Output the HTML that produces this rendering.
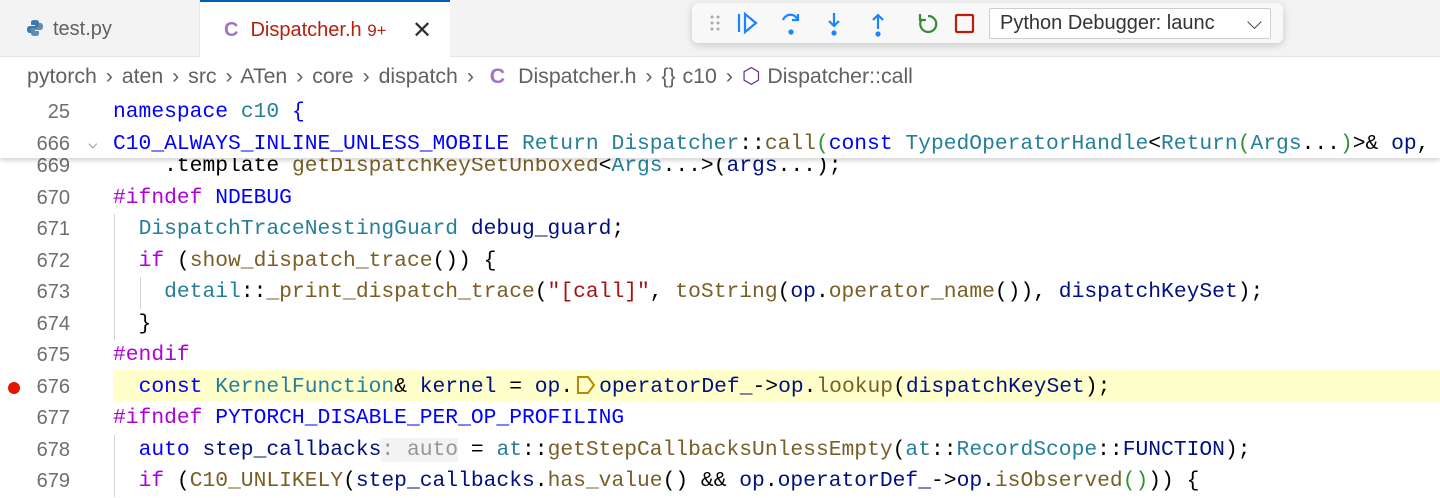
<!DOCTYPE html>
<html><head><meta charset="utf-8"><style>
*{margin:0;padding:0;box-sizing:border-box}
body{width:1440px;height:495px;overflow:hidden;background:#fff;position:relative;font-family:"Liberation Sans",sans-serif}
.tabs{position:absolute;left:0;top:0;width:1440px;height:57px;background:#f3f3f3;border-bottom:1px solid #e5e5e5}
.tab{position:absolute;top:0;height:57px;font-size:20px;line-height:59px;color:#616161}
.t1{left:0;width:200px;padding-left:25px;border-right:1px solid #e5e5e5}
.t2{left:200px;width:250px;background:#fff;border-top:2px solid #005fb8;line-height:57px;padding-left:24px;color:#b5200d;height:58px}
.cc{color:#a074c4;font-weight:bold;margin-right:12px}
.dbg{position:absolute;left:692px;top:3px;width:591px;height:40px;background:#f8f8f8;border-radius:6px;box-shadow:0 2px 8px rgba(0,0,0,.18)}
.sel{position:absolute;left:297px;top:5px;width:282px;height:31px;background:#fff;border:1px solid #cecece;border-radius:2px;font-size:20px;line-height:29px;padding-left:10px;color:#333;overflow:hidden;white-space:nowrap}
.bc{position:absolute;left:27px;top:64px;font-size:21.3px;color:#616161;white-space:pre;word-spacing:1px}
.bc i{font-style:normal;margin:0 2px}
.code{font-family:"Liberation Mono","DejaVu Sans Mono",monospace;font-size:21.3px;white-space:pre}
.ln{position:absolute;left:0;width:70px;text-align:right;color:#6e6e6e;font-family:"Liberation Sans",sans-serif;font-size:20px}
.l{position:absolute;left:0;width:1440px;height:31.6px;line-height:31.6px}
.tx{position:absolute;left:113px;top:2px}
.ln{top:2px}
.k{color:#0000ff}.t{color:#267f99}.f{color:#795e26}.v{color:#001080}.p{color:#af00db}.s{color:#a31515}.g{color:#319331}
.sticky{position:absolute;left:0;top:95px;width:1440px;height:63px;background:#fff;box-shadow:0 3px 4px rgba(0,0,0,.15)}
.guide{position:absolute;width:1px;background:#d3d3d3}
</style></head><body>
<div class="tabs">
 <div class="tab t1"><svg width="20" height="20" viewBox="0 0 20 20" style="vertical-align:-3px;margin-right:8px"><path d="M10 2c-4 0-4 1.5-4 2.5V7h4v1H4.5C3 8 2 9.5 2 11.5S3 15 4.5 15H6v-2.5C6 11 7 10 8.5 10h3C13 10 14 9 14 7.5v-3C14 3 13 2 10 2z" fill="#3d7aab"/><path d="M10 18c4 0 4-1.5 4-2.5V13h-4v-1h5.5c1.5 0 2.5-1.5 2.5-3.5S17 5 15.5 5H14v2.5C14 9 13 10 11.5 10h-3C7 10 6 11 6 12.5v3C6 17 7 18 10 18z" fill="#5a8fb5"/></svg>test.py</div>
 <div class="tab t2"><span class="cc">C</span>Dispatcher.h <span style="font-size:17px">9+</span><span style="position:absolute;left:212px;color:#333;font-size:24px">✕</span></div>
</div>
<div class="dbg">
 <svg width="290" height="40" viewBox="0 0 290 40">
  <g fill="#aaa"><circle cx="20" cy="14" r="1.5"/><circle cx="26" cy="14" r="1.5"/><circle cx="20" cy="20" r="1.5"/><circle cx="26" cy="20" r="1.5"/><circle cx="20" cy="26" r="1.5"/><circle cx="26" cy="26" r="1.5"/></g>
  <g stroke="#1a85ff" stroke-width="2.2" fill="none"><path d="M47 11v18"/><path d="M53 11l11 9-11 9z"/>
  <path d="M91 17a8 8 0 0 1 15 0M106 11v6h-6"/><path d="M142 10v13M137 18l5 5 5-5"/><path d="M186 26V12M181 17l5-5 5 5"/></g>
  <g fill="#1a85ff"><circle cx="99" cy="29" r="2.6"/><circle cx="142" cy="30" r="2.6"/><circle cx="186" cy="31" r="2.6"/></g>
  <path d="M236 13a8 8 0 1 1-6 3M228 11v6h6" stroke="#388a34" stroke-width="2.2" fill="none"/>
  <rect x="264" y="12" width="17" height="17" rx="1" stroke="#b5200d" stroke-width="2.2" fill="none"/>
 </svg>
 <div class="sel">Python Debugger: launc<span style="position:absolute;right:8px;top:0">⌵</span></div>
</div>
<div class="bc">pytorch <i>›</i> aten <i>›</i> src <i>›</i> ATen <i>›</i> core <i>›</i> dispatch <i>›</i>  <span class="cc" style="margin-right:6px">C</span> Dispatcher.h <i>›</i> {} c10 <i>›</i> <span style="color:#652d90">⬡</span> Dispatcher::call</div>

<div class="code">
<div class="guide" style="left:114px;top:214px;height:126px"></div>
<div class="guide" style="left:140px;top:277px;height:32px"></div>
<div class="guide" style="left:114px;top:435px;height:62px"></div>
<div class="l" style="top:149px"><span class="ln">669</span><span class="tx">    .<span class="k" style="color:#000">template</span> <span class="f">getDispatchKeySetUnboxed</span>&lt;<span class="t">Args</span>...&gt;(<span class="v">args</span>...);</span></div>
<div class="l" style="top:180.5px"><span class="ln">670</span><span class="tx"><span class="p">#ifndef</span> <span class="k">NDEBUG</span></span></div>
<div class="l" style="top:212px"><span class="ln">671</span><span class="tx">  <span class="t">DispatchTraceNestingGuard</span> <span class="v">debug_guard</span>;</span></div>
<div class="l" style="top:243.5px"><span class="ln">672</span><span class="tx">  <span class="p">if</span> (<span class="f">show_dispatch_trace</span>()) {</span></div>
<div class="l" style="top:275px"><span class="ln">673</span><span class="tx">    <span class="t">detail</span>::<span class="f">_print_dispatch_trace</span>(<span class="s">"[call]"</span>, <span class="f">toString</span>(<span class="v">op</span>.<span class="f">operator_name</span>()), <span class="v">dispatchKeySet</span>);</span></div>
<div class="l" style="top:306.5px"><span class="ln">674</span><span class="tx">  }</span></div>
<div class="l" style="top:338px"><span class="ln">675</span><span class="tx"><span class="p">#endif</span></span></div>
<div class="l" style="top:369.5px;background:linear-gradient(90deg,transparent 113px,#ffffcc 113px)"><span style="position:absolute;left:8px;top:12px;width:12px;height:12px;border-radius:50%;background:#e51400"></span><span class="ln">676</span><span class="tx">  <span class="k">const</span> <span class="t">KernelFunction</span>&amp; <span class="v">kernel</span> = <span class="v">op</span>.<svg width="22" height="22" viewBox="0 0 22 22" style="vertical-align:-4px;margin:0 2px"><path d="M3 3h10l6 8-6 8H3z" fill="none" stroke="#be8700" stroke-width="2"/></svg><span class="v">operatorDef_</span>-&gt;<span class="v">op</span>.<span class="f">lookup</span>(<span class="v">dispatchKeySet</span>);</span></div>
<div class="l" style="top:401px"><span class="ln">677</span><span class="tx"><span class="p">#ifndef</span> <span class="k">PYTORCH_DISABLE_PER_OP_PROFILING</span></span></div>
<div class="l" style="top:432.5px"><span class="ln">678</span><span class="tx">  <span class="k">auto</span> <span class="v">step_callbacks</span><span style="color:#969696;background:#f3f3f3">: auto</span> = <span class="t">at</span>::<span class="f">getStepCallbacksUnlessEmpty</span>(<span class="t">at</span>::<span class="t">RecordScope</span>::<span class="v">FUNCTION</span>);</span></div>
<div class="l" style="top:464px"><span class="ln">679</span><span class="tx">  <span class="p">if</span> (<span class="f">C10_UNLIKELY</span>(<span class="v">step_callbacks</span>.<span class="f">has_value</span>() &amp;&amp; <span class="v">op</span>.<span class="v">operatorDef_</span>-&gt;<span class="v">op</span>.<span class="f">isObserved</span><span class="g">()</span>)) {</span></div>
<div class="sticky">
 <div class="l" style="top:0px"><span class="ln">25</span><span class="tx"><span class="k">namespace</span> <span class="t">c10</span> <span class="k">{</span></span></div>
 <div class="l" style="top:31.5px"><span class="ln">666</span><span style="position:absolute;left:88px;top:2px;color:#888;font-size:16px">⌵</span><span class="tx"><span class="k">C10_ALWAYS_INLINE_UNLESS_MOBILE</span> <span class="t">Return</span> <span class="t">Dispatcher</span>::<span class="f">call</span><span class="g">(</span><span class="k">const</span> <span class="t">TypedOperatorHandle</span>&lt;<span class="t">Return</span><span class="g">(</span><span class="t">Args</span>...<span class="g">)</span>&gt;&amp; <span class="v">op</span>,</span></div>
</div>
</div>
</body></html>
